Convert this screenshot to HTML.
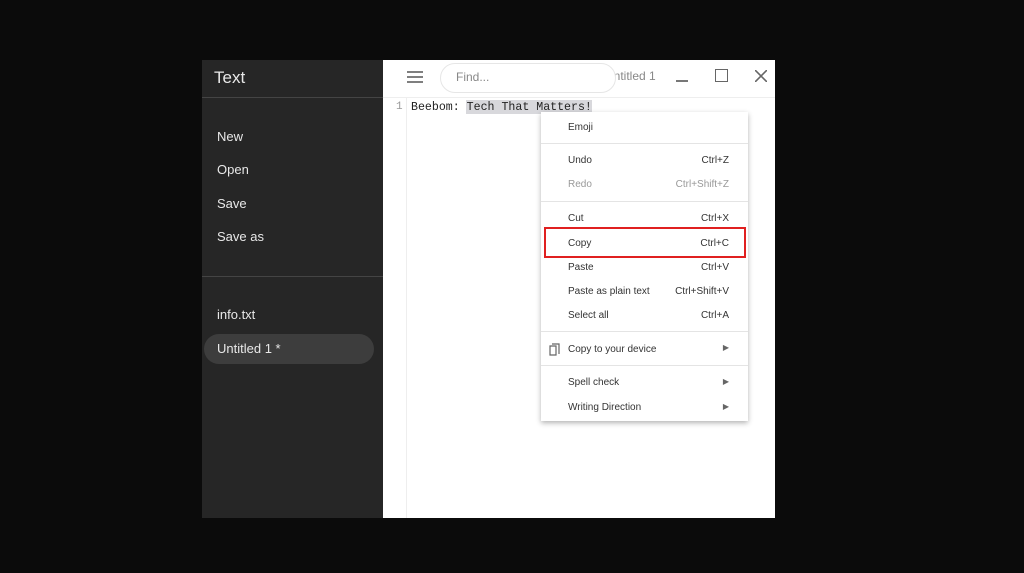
<!DOCTYPE html>
<html><head><style>
body{margin:0;width:1024px;height:573px;background:#0b0b0b;font-family:"Liberation Sans",sans-serif;position:relative;overflow:hidden}
.a{position:absolute}
#side{left:202px;top:60px;width:181px;height:458px;background:#262626;color:#e8e8e8}
#ed{left:383px;top:60px;width:392px;height:458px;background:#fff}
.mi{position:absolute;left:27px;font-size:10px;color:#333}
.sc{position:absolute;right:19px;font-size:10px;color:#333}
.sep{position:absolute;left:0;width:100%;height:1px;background:#e4e4e4}
</style></head><body>
<div id="side" class="a">
 <div class="a" style="left:12px;top:8px;font-size:17px">Text</div>
 <div class="a" style="left:0;top:37px;width:181px;height:1px;background:#444"></div>
 <div class="a" style="left:15px;top:69px;font-size:13px">New</div>
 <div class="a" style="left:15px;top:102px;font-size:13px">Open</div>
 <div class="a" style="left:15px;top:136px;font-size:13px">Save</div>
 <div class="a" style="left:15px;top:169px;font-size:13px">Save as</div>
 <div class="a" style="left:0;top:216px;width:181px;height:1px;background:#444"></div>
 <div class="a" style="left:15px;top:247px;font-size:13px">info.txt</div>
 <div class="a" style="left:2px;top:274px;width:170px;height:30px;border-radius:15px;background:#3d3d3d"></div>
 <div class="a" style="left:15px;top:281px;font-size:13px">Untitled 1 *</div>
</div>
<div id="ed" class="a">
 <svg class="a" style="left:24px;top:10px" width="16" height="14"><path d="M0 2h16M0 7h16M0 12h16" stroke="#555" stroke-width="1.6"/></svg>
 <div class="a" style="left:222px;top:9px;font-size:12px;color:#888">Untitled 1</div>
 <div class="a" style="left:57px;top:3px;width:174px;height:28px;border:1px solid #e6e6e6;border-radius:15px;background:#fff"></div>
 <div class="a" style="left:73px;top:10px;font-size:12px;color:#888">Find...</div>
 <div class="a" style="left:293px;top:20px;width:12px;height:2px;background:#777"></div>
 <div class="a" style="left:332px;top:9px;width:11px;height:11px;border:1.6px solid #666"></div>
 <svg class="a" style="left:372px;top:10px" width="12" height="12"><path d="M0 0L12 12M12 0L0 12" stroke="#666" stroke-width="1.6"/></svg>
 <div class="a" style="left:0;top:37px;width:392px;height:1px;background:#eee"></div>
 <div class="a" style="left:23px;top:38px;width:1px;height:420px;background:#eee"></div>
 <div class="a" style="left:13px;top:41px;font:11px 'Liberation Mono',monospace;color:#999">1</div>
 <div class="a" style="left:83px;top:40px;width:126px;height:14px;background:#d8d8dc"></div>
 <div class="a" style="left:28px;top:41px;font:11.6px 'Liberation Mono',monospace;color:#222">Beebom: Tech That Matters!</div>
</div>
<div class="a" style="left:541px;top:112px;width:207px;height:309px;background:#fff;box-shadow:0 2px 5px rgba(0,0,0,.3)">
 <div class="mi" style="top:10px">Emoji</div>
 <div class="sep" style="top:31px"></div>
 <div class="mi" style="top:43px">Undo</div><div class="sc" style="top:43px">Ctrl+Z</div>
 <div class="mi" style="top:67px;color:#999">Redo</div><div class="sc" style="top:67px;color:#999">Ctrl+Shift+Z</div>
 <div class="sep" style="top:89px"></div>
 <div class="mi" style="top:101px">Cut</div><div class="sc" style="top:101px">Ctrl+X</div>
 <div class="a" style="left:3px;top:115px;width:198px;height:27px;border:2px solid #e02020"></div>
 <div class="mi" style="top:126px">Copy</div><div class="sc" style="top:126px">Ctrl+C</div>
 <div class="mi" style="top:150px">Paste</div><div class="sc" style="top:150px">Ctrl+V</div>
 <div class="mi" style="top:174px">Paste as plain text</div><div class="sc" style="top:174px">Ctrl+Shift+V</div>
 <div class="mi" style="top:198px">Select all</div><div class="sc" style="top:198px">Ctrl+A</div>
 <div class="sep" style="top:219px"></div>
 <svg class="a" style="left:8px;top:231px" width="11" height="13"><path d="M3 1h7v10M1 3h6v9H1z" stroke="#666" fill="none" stroke-width="1.2"/></svg>
 <div class="mi" style="top:232px">Copy to your device</div><div class="sc" style="top:231px;font-size:8px;color:#666">▶</div>
 <div class="sep" style="top:253px"></div>
 <div class="mi" style="top:265px">Spell check</div><div class="sc" style="top:265px;font-size:8px;color:#666">▶</div>
 <div class="mi" style="top:290px">Writing Direction</div><div class="sc" style="top:290px;font-size:8px;color:#666">▶</div>
</div>
</body></html>
